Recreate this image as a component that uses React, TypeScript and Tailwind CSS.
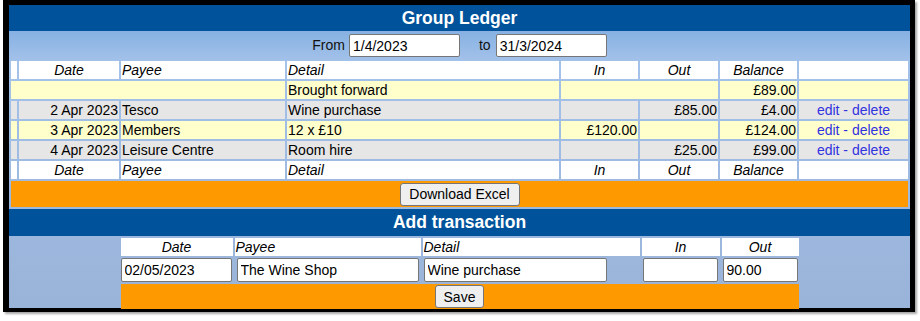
import React from 'react';

type Row = {
  date: string;
  payee: string;
  detail: string;
  inn: string;
  out: string;
  balance: string;
  tone: 'yellow' | 'grey';
};

const rows: Row[] = [
  { date: '2 Apr 2023', payee: 'Tesco', detail: 'Wine purchase', inn: '', out: '£85.00', balance: '£4.00', tone: 'grey' },
  { date: '3 Apr 2023', payee: 'Members', detail: '12 x £10', inn: '£120.00', out: '', balance: '£124.00', tone: 'yellow' },
  { date: '4 Apr 2023', payee: 'Leisure Centre', detail: 'Room hire', inn: '', out: '£25.00', balance: '£99.00', tone: 'grey' },
];

const cell = 'h-[18px] px-px py-px leading-4 align-middle whitespace-nowrap overflow-hidden';
const inputCls =
  'h-[23px] bg-white border border-[#767676] rounded-[2px] px-[3px] text-[14px] text-black outline-none';
const btnCls =
  'bg-[#efefef] border border-[#767676] rounded-[3px] text-[14px] text-black leading-4';

const HeadRow: React.FC = () => (
  <tr className="bg-white italic">
    <td className={cell}></td>
    <td className={`${cell} text-center`}>Date</td>
    <td className={`${cell} text-left`}>Payee</td>
    <td className={`${cell} text-left`}>Detail</td>
    <td className={`${cell} text-center`}>In</td>
    <td className={`${cell} text-center`}>Out</td>
    <td className={`${cell} text-center`}>Balance</td>
    <td className={cell}></td>
  </tr>
);

const App: React.FC = () => {
  return (
    <div className="w-[920px] h-[321px] bg-white font-['Liberation_Sans',Arial,sans-serif] text-[14px] text-black">
      <div className="ml-[3px] w-[912px] border-l-[6px] border-r-[5px] border-t-[5px] border-b-[4px] border-black shadow-[2px_2px_2px_rgba(0,0,0,0.35)]">
        <div className="h-[303px] bg-[linear-gradient(to_bottom,#7fabdf_0px,#86b1e2_26px,#a4c2ea_57px,#9fbce4_140px,#9ab3d8_100%)]">
          {/* Ledger */}
          <div className="h-[26px] bg-[#00539b] text-white font-bold text-[17.5px] flex items-center justify-center">
            Group Ledger
          </div>
          <div className="h-[28px] flex items-center justify-center pt-px">
            <span className="mr-[4px] text-[#111]">From</span>
            <input className={`${inputCls} w-[111px]`} defaultValue="1/4/2023" />
            <span className="ml-[19px] mr-[5px] text-[#111]">to</span>
            <input className={`${inputCls} w-[111px]`} defaultValue="31/3/2024" />
          </div>

          <table className="w-[901px] table-fixed border-separate border-spacing-[2px]">
            <colgroup>
              <col className="w-[6px]" />
              <col className="w-[100px]" />
              <col className="w-[164px]" />
              <col className="w-[272px]" />
              <col className="w-[77px]" />
              <col className="w-[78px]" />
              <col className="w-[77px]" />
              <col className="w-[109px]" />
            </colgroup>
            <tbody>
              <HeadRow />
              <tr className="bg-[#ffffcc]">
                <td className={cell} colSpan={3}></td>
                <td className={`${cell} text-left`}>Brought forward</td>
                <td className={cell} colSpan={2}></td>
                <td className={`${cell} text-right`}>£89.00</td>
                <td className={cell}></td>
              </tr>
              {rows.map((r) => (
                <tr key={r.date} className={r.tone === 'yellow' ? 'bg-[#ffffcc]' : 'bg-[#e6e6e6]'}>
                  <td className={cell}></td>
                  <td className={`${cell} text-right`}>{r.date}</td>
                  <td className={`${cell} text-left`}>{r.payee}</td>
                  <td className={`${cell} text-left`}>{r.detail}</td>
                  <td className={`${cell} text-right`}>{r.inn}</td>
                  <td className={`${cell} text-right`}>{r.out}</td>
                  <td className={`${cell} text-right`}>{r.balance}</td>
                  <td className={`${cell} text-center text-[#3232e0]`}>
                    <a href="#">edit</a> - <a href="#">delete</a>
                  </td>
                </tr>
              ))}
              <HeadRow />
              <tr className="bg-[#ff9900]">
                <td colSpan={8} className="h-[26px] p-0 text-center align-middle">
                  <button className={`${btnCls} h-[23px] w-[120px]`}>Download Excel</button>
                </td>
              </tr>
            </tbody>
          </table>

          {/* Add transaction */}
          <div className="h-[27px] bg-[#00539b] text-white font-bold text-[17.5px] flex items-center justify-center">
            Add transaction
          </div>
          <table className="mx-auto w-[682px] table-fixed border-separate border-spacing-[2px]">
            <colgroup>
              <col className="w-[112px]" />
              <col className="w-[186px]" />
              <col className="w-[217px]" />
              <col className="w-[78px]" />
              <col className="w-[77px]" />
            </colgroup>
            <tbody>
              <tr className="bg-white italic">
                <td className={`${cell} text-center`}>Date</td>
                <td className={`${cell} text-left`}>Payee</td>
                <td className={`${cell} text-left`}>Detail</td>
                <td className={`${cell} text-center`}>In</td>
                <td className={`${cell} text-center`}>Out</td>
              </tr>
              <tr>
                <td className="h-[24px] p-0 align-middle">
                  <input className={`${inputCls} w-[111px] h-[24px]`} defaultValue="02/05/2023" />
                </td>
                <td className="h-[24px] p-0 pl-[2px] align-middle">
                  <input className={`${inputCls} w-[182px] h-[24px]`} defaultValue="The Wine Shop" />
                </td>
                <td className="h-[24px] p-0 pl-px align-middle">
                  <input className={`${inputCls} w-[183px] h-[24px]`} defaultValue="Wine purchase" />
                </td>
                <td className="h-[24px] p-0 pl-px align-middle">
                  <input className={`${inputCls} w-[75px] h-[24px]`} defaultValue="" />
                </td>
                <td className="h-[24px] p-0 pl-px align-middle">
                  <input className={`${inputCls} w-[75px] h-[24px]`} defaultValue="90.00" />
                </td>
              </tr>
              <tr className="bg-[#ff9900]">
                <td colSpan={5} className="h-[25px] p-0 text-center align-middle">
                  <button className={`${btnCls} h-[23px] w-[49px]`}>Save</button>
                </td>
              </tr>
            </tbody>
          </table>
        </div>
      </div>
    </div>
  );
};

export default App;
